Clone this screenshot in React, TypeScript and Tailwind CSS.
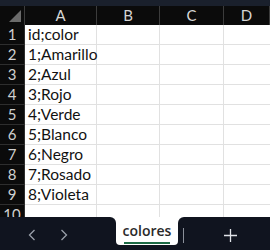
const rows = [
  'id;color',
  '1;Amarillo',
  '2;Azul',
  '3;Rojo',
  '4;Verde',
  '5;Blanco',
  '6;Negro',
  '7;Rosado',
  '8;Violeta',
  '',
];

const cols = [
  { name: 'A', w: 'w-[72px]' },
  { name: 'B', w: 'w-[63px]' },
  { name: 'C', w: 'w-[64px]' },
  { name: 'D', w: 'w-[46px]' },
];

export default function App() {
  return (
    <div className="relative flex h-[250px] w-[270px] flex-col overflow-hidden bg-white font-['Lato',sans-serif]">
      <div className="h-[6px] shrink-0 bg-[#1a202c]" />
      <div className="flex h-[19px] shrink-0 bg-[#0b0b0b] text-[15px] leading-[19px] text-[#d6d6d6]">
        <div className="relative w-[25px] shrink-0 border-r border-[#3c3c3c]">
          <div className="absolute bottom-[3px] right-[3px] h-0 w-0 border-b-[12px] border-l-[12px] border-b-[#6b6b6b] border-l-transparent" />
        </div>
        {cols.map((c) => (
          <div key={c.name} className={`${c.w} shrink-0 border-r border-[#3c3c3c] text-center`}>
            {c.name}
          </div>
        ))}
      </div>
      <div className="flex flex-col">
        {rows.map((r, i) => (
          <div key={i} className="flex h-[20px] shrink-0 text-[15.5px] leading-[19px]">
            <div className="w-[25px] shrink-0 border-b border-r border-[#2e2e2e] bg-[#0b0b0b] text-center text-[15px] text-[#d0d0d0]">
              {i + 1}
            </div>
            <div className="w-[72px] shrink-0 whitespace-nowrap border-b border-r border-[#e1e1e1] pl-[3px] text-[#111]">
              {r}
            </div>
            <div className="w-[63px] shrink-0 border-b border-r border-[#e1e1e1]" />
            <div className="w-[64px] shrink-0 border-b border-r border-[#e1e1e1]" />
            <div className="w-[46px] shrink-0 border-b border-[#e1e1e1]" />
          </div>
        ))}
      </div>
      <div className="absolute bottom-0 left-0 flex h-[33px] w-[270px] items-stretch">
        <div className="flex w-[116px] items-center gap-[22px] rounded-tr-[6px] bg-[#10141f] pl-[27px] pt-[3px]">
          <svg width="10" height="14" viewBox="0 0 10 14" fill="none" stroke="#9aa0aa" strokeWidth="1.3">
            <path d="M7.5 2 L2.5 7 L7.5 12" />
          </svg>
          <svg width="10" height="14" viewBox="0 0 10 14" fill="none" stroke="#9aa0aa" strokeWidth="1.3">
            <path d="M2.5 2 L7.5 7 L2.5 12" />
          </svg>
        </div>
        <div className="flex w-[62px] flex-col bg-[#10141f]">
          <div className="flex h-[28px] flex-col items-center rounded-b-[4px] bg-white pt-[4px]">
            <span className="font-['Open_Sans',sans-serif] text-[14px] font-semibold leading-[20px] text-[#2a2a2a]">colores</span>
            <div className="mt-[1px] h-[2px] w-[46px] bg-[#1d6b45]" />
          </div>
        </div>
        <div className="flex flex-1 items-center rounded-tl-[6px] bg-[#10141f] pt-[3px]">
          <div className="ml-[5px] h-[15px] w-px bg-[#8a8f99]" />
          <svg className="ml-[40px]" width="13" height="13" viewBox="0 0 13 13" stroke="#e0e3e8" strokeWidth="1.3">
            <path d="M6.5 0 V13 M0 6.5 H13" />
          </svg>
        </div>
      </div>
    </div>
  );
}
